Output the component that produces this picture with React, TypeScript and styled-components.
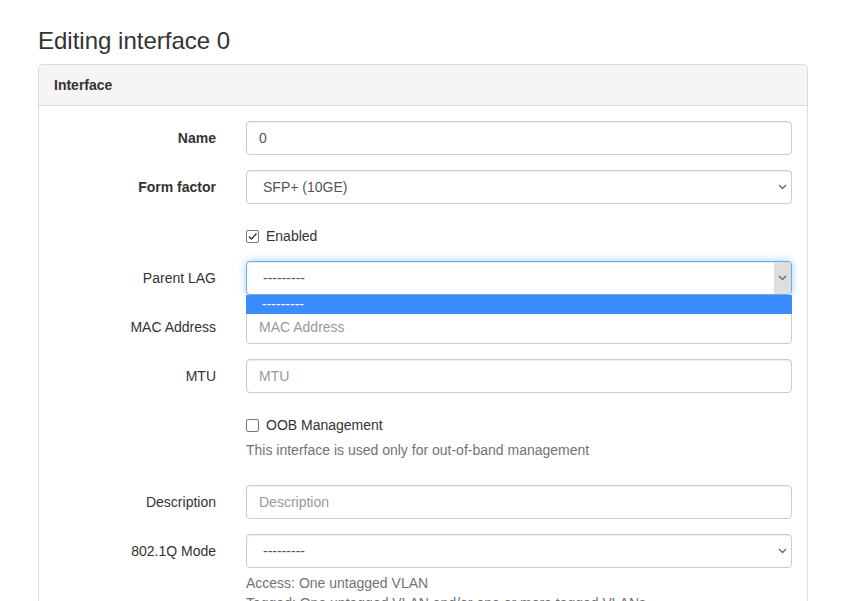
import React from "react";
import styled, { createGlobalStyle } from "styled-components";

const Global = createGlobalStyle`
  html, body { margin: 0; padding: 0; background: #fff; }
  body {
    font-family: "Liberation Sans", Arial, Helvetica, sans-serif;
    font-size: 14px;
    line-height: 1.42857;
    color: #333;
  }
  * { box-sizing: border-box; }
  input::placeholder { color: #999; opacity: 1; }
`;

const Page = styled.div`
  padding: 28px 47px 0 38px;
`;

const Title = styled.h1`
  margin: 0 0 10px;
  font-size: 24px;
  font-weight: 400;
  line-height: 26px;
  color: #333;
`;

const Panel = styled.div`
  border: 1px solid #ddd;
  border-radius: 4px;
  background: #fff;
  width: 770px;
`;

const PanelHeading = styled.div`
  padding: 10px 15px;
  background: #f5f5f5;
  border-bottom: 1px solid #ddd;
  border-radius: 3px 3px 0 0;
  font-weight: 700;
  line-height: 20px;
`;

const PanelBody = styled.div`
  padding: 15px 0;
`;

const Row = styled.div`
  display: grid;
  grid-template-columns: 192px 576px;
  margin-bottom: 15px;
`;

const Label = styled.label<{ $required?: boolean }>`
  padding: 7px 15px 0;
  text-align: right;
  font-weight: ${(p) => (p.$required ? 700 : 400)};
  line-height: 20px;
`;

const Field = styled.div`
  padding: 0 15px;
  position: relative;
`;

const Input = styled.input`
  display: block;
  width: 100%;
  height: 34px;
  padding: 6px 12px;
  font: inherit;
  font-size: 14px;
  line-height: 20px;
  color: #555;
  border: 1px solid #ccc;
  border-radius: 4px;
  box-shadow: inset 0 1px 1px rgba(0, 0, 0, 0.075);
  background: #fff;
  outline: none;
`;

const SelectBox = styled.div<{ $focus?: boolean }>`
  position: relative;
  height: 34px;
  padding: 6px 12px 6px 16px;
  line-height: 20px;
  color: #555;
  border: 1px solid ${(p) => (p.$focus ? "#66afe9" : "#ccc")};
  border-radius: 4px;
  background: #fff;
  box-shadow: ${(p) =>
    p.$focus
      ? "inset 0 1px 1px rgba(0,0,0,.075), 0 0 8px rgba(102,175,233,.6)"
      : "inset 0 1px 1px rgba(0,0,0,.075)"};
`;

const ArrowZone = styled.span<{ $hover?: boolean }>`
  position: absolute;
  top: 0;
  right: 0;
  bottom: 0;
  width: 17px;
  display: flex;
  align-items: center;
  justify-content: center;
  background: ${(p) => (p.$hover ? "#dedede" : "transparent")};
  border-radius: 0 3px 3px 0;
`;

const Chevron = () => (
  <svg width="9" height="6" viewBox="0 0 9 6">
    <path d="M1 1 L4.5 4.5 L8 1" fill="none" stroke="#666" strokeWidth="1.3" />
  </svg>
);

const DropList = styled.div`
  position: absolute;
  left: 15px;
  right: 15px;
  top: 34px;
  z-index: 5;
  background: #fff;
`;

const Option = styled.div<{ $selected?: boolean }>`
  height: 19px;
  padding: 0 16px;
  line-height: 19px;
  color: ${(p) => (p.$selected ? "#fff" : "#333")};
  background: ${(p) => (p.$selected ? "#3b8dff" : "#fff")};
`;

const CheckRow = styled.div`
  grid-column: 2;
  padding: 7px 15px 0;
  min-height: 27px;
`;

const CheckLabel = styled.label`
  display: flex;
  align-items: center;
  gap: 7px;
  line-height: 20px;
`;

const Box = styled.span`
  width: 13px;
  height: 13px;
  border: 1px solid #767676;
  border-radius: 2px;
  display: inline-flex;
  align-items: center;
  justify-content: center;
  background: #fff;
`;

const Check = ({ checked }: { checked?: boolean }) => (
  <Box>
    {checked && (
      <svg width="11" height="11" viewBox="0 0 11 11">
        <path d="M2 5.5 L4.5 8 L9.5 2.5" fill="none" stroke="#333" strokeWidth="1.4" />
      </svg>
    )}
  </Box>
);

const Help = styled.span`
  display: block;
  margin: 5px 0 10px;
  color: #737373;
  line-height: 20px;
`;

export default function App() {
  return (
    <>
      <Global />
      <Page>
        <Title>Editing interface 0</Title>
        <Panel>
          <PanelHeading>Interface</PanelHeading>
          <PanelBody>
            <Row>
              <Label $required>Name</Label>
              <Field>
                <Input defaultValue="0" />
              </Field>
            </Row>
            <Row>
              <Label $required>Form factor</Label>
              <Field>
                <SelectBox>
                  SFP+ (10GE)
                  <ArrowZone>
                    <Chevron />
                  </ArrowZone>
                </SelectBox>
              </Field>
            </Row>
            <Row>
              <CheckRow>
                <CheckLabel>
                  <Check checked />
                  Enabled
                </CheckLabel>
              </CheckRow>
            </Row>
            <Row>
              <Label>Parent LAG</Label>
              <Field>
                <SelectBox $focus>
                  ---------
                  <ArrowZone $hover>
                    <Chevron />
                  </ArrowZone>
                </SelectBox>
                <DropList>
                  <Option $selected>---------</Option>
                </DropList>
              </Field>
            </Row>
            <Row>
              <Label>MAC Address</Label>
              <Field>
                <Input placeholder="MAC Address" />
              </Field>
            </Row>
            <Row>
              <Label>MTU</Label>
              <Field>
                <Input placeholder="MTU" />
              </Field>
            </Row>
            <Row>
              <CheckRow>
                <CheckLabel>
                  <Check />
                  OOB Management
                </CheckLabel>
                <Help>This interface is used only for out-of-band management</Help>
              </CheckRow>
            </Row>
            <Row>
              <Label>Description</Label>
              <Field>
                <Input placeholder="Description" />
              </Field>
            </Row>
            <Row>
              <Label>802.1Q Mode</Label>
              <Field>
                <SelectBox>
                  ---------
                  <ArrowZone>
                    <Chevron />
                  </ArrowZone>
                </SelectBox>
                <Help>
                  Access: One untagged VLAN
                  <br />
                  Tagged: One untagged VLAN and/or one or more tagged VLANs
                </Help>
              </Field>
            </Row>
          </PanelBody>
        </Panel>
      </Page>
    </>
  );
}
